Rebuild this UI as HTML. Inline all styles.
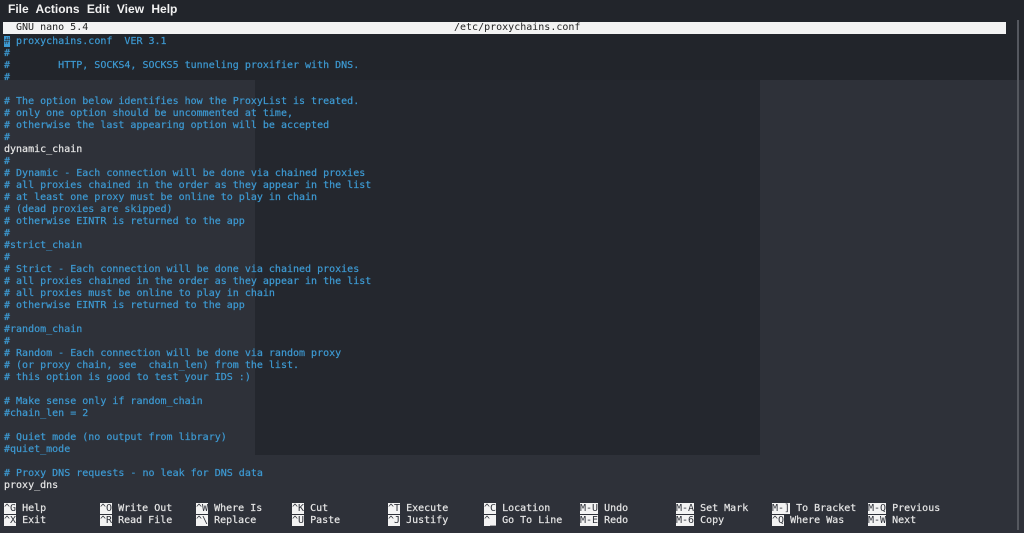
<!DOCTYPE html>
<html><head><meta charset="utf-8"><style>
body{margin:0;width:1024px;height:533px;overflow:hidden;background:#2e3139;position:relative;font-family:"DejaVu Sans Mono","Liberation Mono",monospace;}
.band{position:absolute;left:0;top:0;width:1024px;height:80px;background:#22252b;}
.ghost{position:absolute;left:255px;top:80px;width:505px;height:375px;background:#24272e;}
.menu{position:absolute;left:8px;top:2px;font:bold 12px "Liberation Sans",sans-serif;color:#f2f2f2;word-spacing:4px;}
.title{position:absolute;left:3px;top:22px;width:1003px;height:12px;background:#f3f3f3;color:#222;font-size:10px;line-height:12px;}
.title span{position:absolute;top:0}
pre{position:absolute;left:4px;top:36px;margin:0;font-size:10px;line-height:12px;color:#3d9ad3;-webkit-text-stroke:0.2px #3d9ad3;}
.w{color:#e6e6e6;-webkit-text-stroke:0.2px #e6e6e6}
.cur{background:#3d9ad3;color:#2e3139}
.sc{position:absolute;font-size:10px;line-height:12px;color:#e6e6e6;white-space:pre;-webkit-text-stroke:0.2px #e6e6e6}
.k{background:#f3f3f3;color:#2e3139;-webkit-text-stroke:0}
.sb{position:absolute;left:1017px;top:20px;width:2px;height:510px;background:#55585f;}
</style></head><body>
<div class="band"></div><div class="ghost"></div>
<div class="menu">File Actions Edit View Help</div>
<div class="title"><span style="left:13px">GNU nano 5.4</span><span style="left:451px">/etc/proxychains.conf</span></div>
<pre><span class="cur">#</span> proxychains.conf  VER 3.1
#
#        HTTP, SOCKS4, SOCKS5 tunneling proxifier with DNS.
#

# The option below identifies how the ProxyList is treated.
# only one option should be uncommented at time,
# otherwise the last appearing option will be accepted
#
<span class="w">dynamic_chain</span>
#
# Dynamic - Each connection will be done via chained proxies
# all proxies chained in the order as they appear in the list
# at least one proxy must be online to play in chain
# (dead proxies are skipped)
# otherwise EINTR is returned to the app
#
#strict_chain
#
# Strict - Each connection will be done via chained proxies
# all proxies chained in the order as they appear in the list
# all proxies must be online to play in chain
# otherwise EINTR is returned to the app
#
#random_chain
#
# Random - Each connection will be done via random proxy
# (or proxy chain, see  chain_len) from the list.
# this option is good to test your IDS :)

# Make sense only if random_chain
#chain_len = 2

# Quiet mode (no output from library)
#quiet_mode

# Proxy DNS requests - no leak for DNS data
<span class="w">proxy_dns</span></pre>
<div class="sc" style="left:4px;top:503px"><span class="k">^G</span> Help</div>
<div class="sc" style="left:100px;top:503px"><span class="k">^O</span> Write Out</div>
<div class="sc" style="left:196px;top:503px"><span class="k">^W</span> Where Is</div>
<div class="sc" style="left:292px;top:503px"><span class="k">^K</span> Cut</div>
<div class="sc" style="left:388px;top:503px"><span class="k">^T</span> Execute</div>
<div class="sc" style="left:484px;top:503px"><span class="k">^C</span> Location</div>
<div class="sc" style="left:580px;top:503px"><span class="k">M-U</span> Undo</div>
<div class="sc" style="left:676px;top:503px"><span class="k">M-A</span> Set Mark</div>
<div class="sc" style="left:772px;top:503px"><span class="k">M-]</span> To Bracket</div>
<div class="sc" style="left:868px;top:503px"><span class="k">M-Q</span> Previous</div>
<div class="sc" style="left:4px;top:515px"><span class="k">^X</span> Exit</div>
<div class="sc" style="left:100px;top:515px"><span class="k">^R</span> Read File</div>
<div class="sc" style="left:196px;top:515px"><span class="k">^\</span> Replace</div>
<div class="sc" style="left:292px;top:515px"><span class="k">^U</span> Paste</div>
<div class="sc" style="left:388px;top:515px"><span class="k">^J</span> Justify</div>
<div class="sc" style="left:484px;top:515px"><span class="k">^_</span> Go To Line</div>
<div class="sc" style="left:580px;top:515px"><span class="k">M-E</span> Redo</div>
<div class="sc" style="left:676px;top:515px"><span class="k">M-6</span> Copy</div>
<div class="sc" style="left:772px;top:515px"><span class="k">^Q</span> Where Was</div>
<div class="sc" style="left:868px;top:515px"><span class="k">M-W</span> Next</div>
<div class="sb"></div>
</body></html>
